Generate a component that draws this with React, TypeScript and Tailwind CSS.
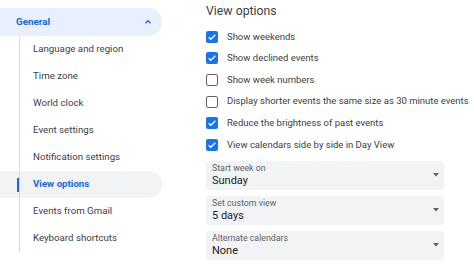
import React from "react";

const items = [
  "Language and region",
  "Time zone",
  "World clock",
  "Event settings",
  "Notification settings",
  "View options",
  "Events from Gmail",
  "Keyboard shortcuts",
];

const checks: [string, boolean][] = [
  ["Show weekends", true],
  ["Show declined events", true],
  ["Show week numbers", false],
  ["Display shorter events the same size as 30 minute events", false],
  ["Reduce the brightness of past events", true],
  ["View calendars side by side in Day View", true],
];

const selects: [string, string][] = [
  ["Start week on", "Sunday"],
  ["Set custom view", "5 days"],
  ["Alternate calendars", "None"],
];

function Checkbox({ checked }: { checked: boolean }) {
  if (checked) {
    return (
      <div className="w-[12px] h-[12px] rounded-[2px] bg-[#1a73e8] flex items-center justify-center shrink-0">
        <svg width="10" height="10" viewBox="0 0 24 24">
          <path d="M4 12.5l5 5L20 6.5" fill="none" stroke="white" strokeWidth="3" />
        </svg>
      </div>
    );
  }
  return <div className="w-[12px] h-[12px] rounded-[2px] border-[1.5px] border-[#5f6368] shrink-0" />;
}

export default function App() {
  return (
    <div
      className="w-[474px] h-[265px] overflow-hidden bg-white flex"
      style={{ fontFamily: "Roboto, 'Noto Sans', Arial, sans-serif" }}
    >
      <div className="w-[206px] shrink-0 pt-[8px]">
        <div className="w-[162px] h-[28px] rounded-r-full bg-[#e8f0fe] flex items-center pl-[16px] pr-[9px]">
          <span className="text-[9.8px] font-bold text-[#1967d2] flex-1">General</span>
          <svg width="10" height="10" viewBox="0 0 24 24">
            <path d="M6 15l6-6 6 6" fill="none" stroke="#1967d2" strokeWidth="3" />
          </svg>
        </div>
        <div className="flex flex-col">
          {items.map((t) => {
            const active = t === "View options";
            return (
              <div
                key={t}
                className={`w-[162px] h-[27px] flex items-center rounded-r-full ${active ? "bg-[#f1f3f4]" : ""}`}
              >
                <div className="w-[19px] shrink-0" />
                <div className="relative w-px self-stretch bg-[#dadce0] flex items-center">
                  {active && <div className="absolute left-[-2px] w-[2px] h-[14px] bg-[#1967d2]" />}
                </div>
                <span
                  className={`ml-[13px] text-[9.7px] ${active ? "font-bold text-[#1967d2]" : "text-[#3c4043]"}`}
                >
                  {t}
                </span>
              </div>
            );
          })}
        </div>
      </div>
      <div className="flex-1 flex flex-col">
        <div className="h-[26px] flex items-start pt-[2px]">
          <span className="text-[12.3px] text-[#3c4043] leading-[18px]">View options</span>
        </div>
        {checks.map(([t, c]) => (
          <div key={t} className="h-[21.6px] flex items-center gap-[9px]">
            <Checkbox checked={c} />
            <span className="text-[9.5px] text-[#3c4043] whitespace-nowrap">{t}</span>
          </div>
        ))}
        <div className="flex flex-col gap-[6px] mt-[5px]">
          {selects.map(([l, v]) => (
            <div
              key={l}
              className="w-[238px] h-[29px] bg-[#f1f3f4] rounded-[4px] flex items-center pl-[6px] pr-[5px]"
            >
              <div className="flex-1 flex flex-col">
                <span className="text-[8.8px] leading-[11px] text-[#5f6368]">{l}</span>
                <span className="text-[11px] leading-[13px] text-[#202124]">{v}</span>
              </div>
              <svg width="6" height="4" viewBox="0 0 6 4">
                <path d="M0 0h6L3 3.5z" fill="#5f6368" />
              </svg>
            </div>
          ))}
        </div>
      </div>
    </div>
  );
}
